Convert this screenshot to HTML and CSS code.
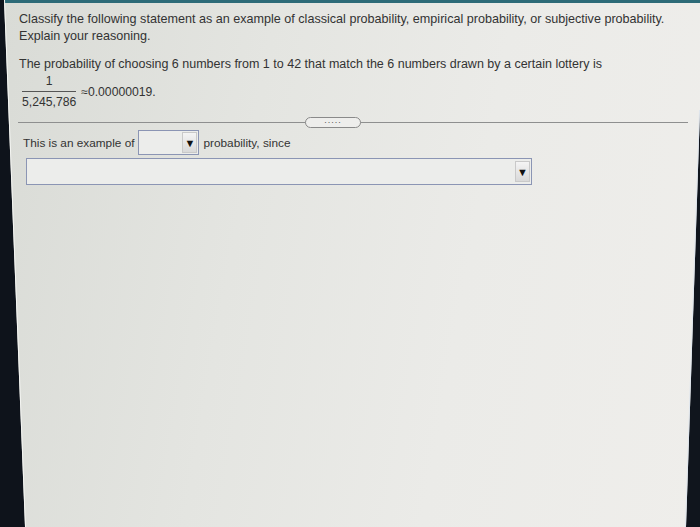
FILE: index.html
```
<!DOCTYPE html>
<html>
<head>
<meta charset="utf-8">
<link rel="stylesheet" href="styles.css">
</head>
<body>
<div class="page">
  <div class="topbar"></div>
  <div class="content">
    <p class="q">Classify the following statement as an example of classical probability, empirical probability, or subjective probability.<br>Explain your reasoning.</p>
    <p class="q stmt">The probability of choosing 6 numbers from 1 to 42 that match the 6 numbers drawn by a certain lottery is</p>
    <div class="fracline">
      <span class="frac"><span class="num">1</span><span class="den">5,245,786</span></span>
      <span class="approx">≈0.00000019.</span>
    </div>
  </div>
  <div class="divider">
    <span class="pill">.....</span>
  </div>
  <div class="answer">
    <div class="row">
      <span>This is an example of</span>
      <span class="select small"><span class="arrow">▼</span></span>
      <span>probability, since</span>
    </div>
    <div class="select long"><span class="arrow">▼</span></div>
  </div>
  <svg class="frame" width="700" height="527" viewBox="0 0 700 527">
    <polygon points="0,0 4,0 25,527 0,527" fill="#0e131b"/>
    <line x1="4.5" y1="0" x2="25.5" y2="527" stroke="#f4f5f2" stroke-width="1"/>
    <polygon points="700,110 686,527 700,527" fill="#10151d"/>
    <line x1="699.5" y1="110" x2="685.5" y2="527" stroke="#dfe6ee" stroke-width="1"/>
  </svg>
</div>
</body>
</html>
```
FILE: styles.css
```
html, body {
  margin: 0;
  padding: 0;
}
.page {
  width: 700px;
  height: 527px;
  position: relative;
  overflow: hidden;
  background: linear-gradient(100deg, #d9dbd6 0%, #e4e5e1 35%, #ebebe8 65%, #efeeeb 100%);
  font-family: "Liberation Sans", Arial, sans-serif;
  color: #333;
}
.topbar {
  height: 3px;
  background: #2d6b78;
}
.content {
  padding: 8px 0 0 19px;
}
.q {
  margin: 0;
  font-size: 12.6px;
  line-height: 17px;
}
.stmt {
  margin-top: 11px;
  font-size: 12.5px;
}
.fracline {
  display: flex;
  align-items: center;
  margin-top: 1px;
  margin-left: 3px;
  font-size: 12.2px;
}
.frac {
  display: inline-flex;
  flex-direction: column;
  align-items: center;
}
.num {
  line-height: 14px;
  padding-bottom: 3px;
  border-bottom: 1px solid #555;
  align-self: stretch;
  text-align: center;
}
.den {
  line-height: 14px;
  padding-top: 3px;
}
.approx {
  margin-left: 5px;
}
.divider {
  position: relative;
  margin: 13px 12px 0 18px;
  border-top: 1px solid #8e8f8f;
  height: 0;
}
.pill {
  position: absolute;
  left: 287px;
  top: -6px;
  width: 54px;
  height: 9px;
  border: 1px solid #8a8a8a;
  border-radius: 6px;
  background: #eeeeec;
  font-size: 9px;
  line-height: 4px;
  text-align: center;
  letter-spacing: 1px;
  color: #555;
}
.answer {
  padding: 7px 0 0 23px;
  font-size: 11.8px;
}
.row {
  display: flex;
  align-items: center;
  gap: 4px;
}
.select {
  display: flex;
  justify-content: flex-end;
  align-items: center;
  box-sizing: border-box;
  border: 1px solid #8b95b4;
  background: #ecedeb;
  padding-right: 1px;
}
.select.small {
  width: 61px;
  height: 25px;
}
.select.long {
  margin: 3px 0 0 3px;
  width: 506px;
  height: 27px;
}
.arrow {
  width: 15px;
  height: 21px;
  box-sizing: border-box;
  border: 1px solid #c9c9c9;
  background: linear-gradient(#f4f4f4, #d9d9d9);
  color: #111;
  font-size: 11px;
  line-height: 20px;
  text-align: center;
}
.frame {
  position: absolute;
  left: 0;
  top: 0;
}
```
